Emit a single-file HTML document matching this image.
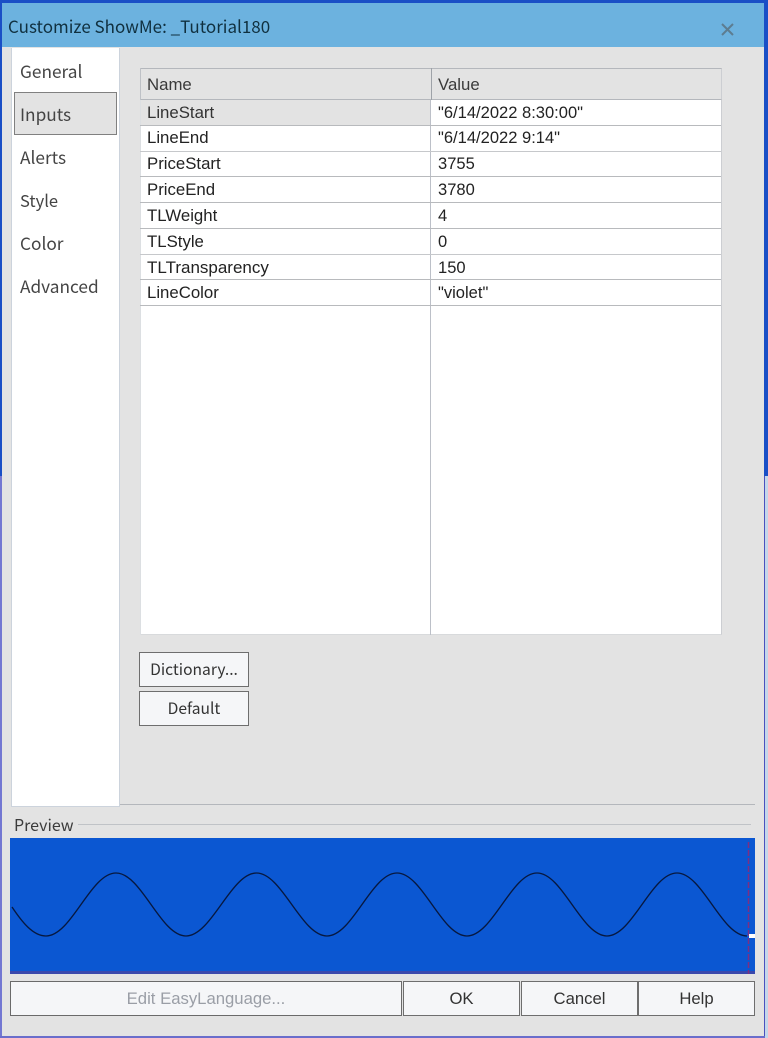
<!DOCTYPE html>
<html><head><meta charset="utf-8">
<style>
html,body{margin:0;padding:0;width:768px;height:1038px;overflow:hidden;background:#e3e3e3}
div{position:absolute;box-sizing:border-box}
.s{font-family:"Noto Sans CJK JP","DejaVu Sans",sans-serif;color:#3d3d3d;white-space:nowrap}
.l{font-family:"Liberation Sans",sans-serif;color:#222;font-size:16.8px;white-space:nowrap;line-height:20px}
.v{font-size:16.55px}
.nav{left:20px;font-size:17.25px;line-height:24px;color:#444}
.line{background:#b8babd;height:1px;left:140px;width:581px}
.btn{background:#f5f6f8;border:1px solid #6e6e6e;text-align:center;font-family:"Liberation Sans",sans-serif;font-size:16.7px;color:#333;line-height:33px}
</style></head>
<body>
<div style="left:0;top:0;width:768px;height:3px;background:#1a4fc6"></div>
<div style="left:0;top:0;width:2px;height:476px;background:#1a4fc6"></div>
<div style="left:0;top:476px;width:2px;height:562px;background:#7377d2"></div>
<div style="left:764px;top:0;width:4px;height:476px;background:#1a4fc6"></div>
<div style="left:764px;top:476px;width:4px;height:562px;background:#c3d6ea"></div>
<div style="left:764px;top:476px;width:1px;height:562px;background:#4a50bd"></div>
<div style="left:0;top:1036px;width:765px;height:2px;background:#6a6ecb"></div>

<div style="left:2px;top:3px;width:762px;height:44px;background:#6cb2df"></div>
<div class="s" style="left:8px;top:13px;font-size:17px;line-height:26px;color:#10303f">Customize ShowMe: _Tutorial180</div>
<svg style="position:absolute;left:720px;top:22px" width="15" height="15" viewBox="0 0 15 15"><path d="M2 2L13 13M13 2L2 13" stroke="#5d7d90" stroke-width="2" fill="none"/></svg>

<div style="left:11px;top:48px;width:109px;height:759px;background:#fff;border:1px solid #ccd3dc;border-top:0"></div>
<div style="left:14px;top:92px;width:103px;height:43px;background:#e3e3e3;border:1px solid #808080"></div>
<div class="s nav" style="top:59px">General</div>
<div class="s nav" style="top:102px">Inputs</div>
<div class="s nav" style="top:145px">Alerts</div>
<div class="s nav" style="top:188px;font-size:16.5px">Style</div>
<div class="s nav" style="top:231px">Color</div>
<div class="s nav" style="top:274px">Advanced</div>

<div style="left:140px;top:68px;width:582px;height:567px;background:#fff;border-right:1px solid #ccced2;border-bottom:1px solid #d8dadc"></div>
<div style="left:140px;top:68px;width:582px;height:32px;background:#e3e3e3;border-top:1px solid #b4b7bc;border-bottom:1px solid #b4b7bc;border-right:1px solid #ccced2"></div>
<div style="left:140px;top:68px;width:1px;height:32px;background:#bec1c6"></div>
<div style="left:140px;top:100px;width:291px;height:25px;background:#e3e3e3"></div>
<div style="left:431px;top:68px;width:1px;height:32px;background:#9ea2a8"></div>
<div style="left:430px;top:100px;width:1px;height:535px;background:#bcc0c8"></div>
<div style="left:140px;top:100px;width:1px;height:535px;background:#dcdfe2"></div>
<div class="line" style="top:125px"></div>
<div class="line" style="top:150.5px;height:1.5px;background:#c6c8cb"></div>
<div class="line" style="top:176px"></div>
<div class="line" style="top:202px"></div>
<div class="line" style="top:228px"></div>
<div class="line" style="top:253.5px;height:1.5px;background:#c6c8cb"></div>
<div class="line" style="top:279px"></div>
<div class="line" style="top:305px"></div>

<div class="l" style="left:147px;top:75px;color:#3a3a3a">Name</div>
<div class="l" style="left:438px;top:75px;color:#3a3a3a">Value</div>
<div class="l" style="left:147px;top:103px;color:#333">LineStart</div>
<div class="l" style="left:147px;top:128px">LineEnd</div>
<div class="l" style="left:147px;top:154px">PriceStart</div>
<div class="l" style="left:147px;top:180px">PriceEnd</div>
<div class="l" style="left:147px;top:206px">TLWeight</div>
<div class="l" style="left:147px;top:232px">TLStyle</div>
<div class="l" style="left:147px;top:258px;font-size:17px">TLTransparency</div>
<div class="l" style="left:147px;top:283px">LineColor</div>
<div class="l v" style="left:438px;top:103px">"6/14/2022 8:30:00"</div>
<div class="l v" style="left:438px;top:128px">"6/14/2022 9:14"</div>
<div class="l v" style="left:438px;top:154px">3755</div>
<div class="l v" style="left:438px;top:180px">3780</div>
<div class="l v" style="left:438px;top:206px">4</div>
<div class="l v" style="left:438px;top:232px">0</div>
<div class="l v" style="left:438px;top:258px">150</div>
<div class="l v" style="left:438px;top:283px">"violet"</div>

<div class="btn s" style="left:139px;top:652px;width:110px;height:35px;font-family:'Noto Sans CJK JP',sans-serif;font-size:15.6px;line-height:33px">Dictionary...</div>
<div class="btn s" style="left:139px;top:691px;width:110px;height:35px;font-family:'Noto Sans CJK JP',sans-serif;font-size:15.6px;line-height:33px">Default</div>

<div style="left:120px;top:804px;width:635px;height:1px;background:#b4b7bc"></div>
<div class="s" style="left:14px;top:813px;font-size:16px;line-height:22px;color:#3c3c3c">Preview</div>
<div style="left:78px;top:824px;width:673px;height:1px;background:#c0c3c7"></div>

<div style="left:10px;top:838px;width:745px;height:136px;background:#0b57d2"></div>
<div style="left:10px;top:971px;width:745px;height:3px;background:#3a48ac"></div>
<svg style="position:absolute;left:0;top:838px" width="768" height="136" viewBox="0 838 768 136">
<path d="M12 907C22 922 33 936 46 936C71.5 936 90.500 873 116 873C141.500 873 160.500 936 186 936C211.500 936 231 873 256.500 873C282 873 301.500 936 327 936C352.500 936 371.500 873 397 873C422.500 873 441.500 936 467 936C492.500 936 511.500 873 537 873C562.500 873 581.500 936 607 936C632.500 936 651.500 873 677 873C702.500 873 721.500 936 747 936" fill="none" stroke="#07183f" stroke-width="1.35"/>
<path d="M748.500 842V974" stroke="#7d2f84" stroke-width="1.500" stroke-dasharray="6 2" fill="none"/>
<rect x="749" y="934" width="6" height="4" fill="#fff"/>
</svg>

<div class="btn" style="left:10px;top:981px;width:392px;height:35px;color:#9a9ea6;border-color:#6a6a6a">Edit EasyLanguage...</div>
<div class="btn" style="left:403px;top:981px;width:117px;height:35px">OK</div>
<div class="btn" style="left:521px;top:981px;width:117px;height:35px">Cancel</div>
<div class="btn" style="left:638px;top:981px;width:117px;height:35px">Help</div>
</body></html>
